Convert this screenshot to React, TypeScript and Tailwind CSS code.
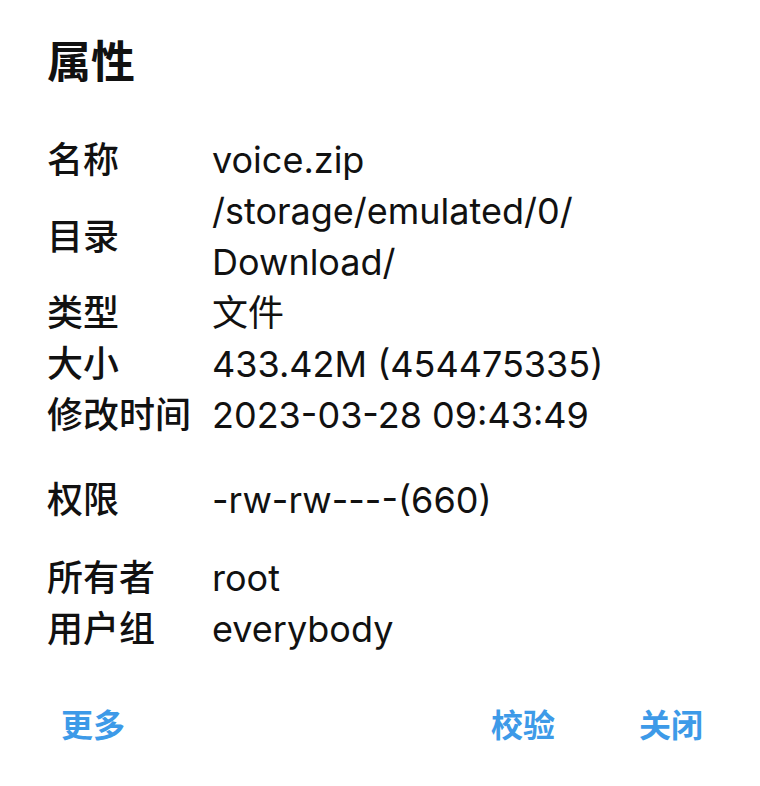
const ROWS: Array<{ label: string; value: string[]; gap?: string }> = [
  { label: "名称", value: ["voice.zip"] },
  { label: "目录", value: ["/storage/emulated/0/", "Download/"] },
  { label: "类型", value: ["文件"] },
  { label: "大小", value: ["433.42M (454475335)"] },
  { label: "修改时间", value: ["2023-03-28 09:43:49"] },
  { label: "权限", value: ["-rw-rw----(660)"], gap: "mt-[34px]" },
  { label: "所有者", value: ["root"], gap: "mt-[27px]" },
  { label: "用户组", value: ["everybody"] },
];

export default function App() {
  return (
    <div className="min-h-[786px] w-[760px] bg-white pl-[47px] pr-[43px] pt-[32px] font-['Inter','Noto_Sans_CJK_SC',sans-serif] text-[#111]">
      <h1 className="text-[44px] font-bold leading-[60px]">属性</h1>

      <div className="mt-[43px]">
        {ROWS.map((row) => (
          <div key={row.label} className={`flex items-center ${row.gap ?? ""}`}>
            <div className="w-[165px] shrink-0 text-[36px] font-medium leading-[51px]">{row.label}</div>
            <div className="text-[36px] leading-[51px]">
              {row.value.map((line) => (
                <div key={line}>{line}</div>
              ))}
            </div>
          </div>
        ))}
      </div>

      <div className="mt-[47px] flex items-center">
        <button type="button" className="px-[14px] text-[32px] font-bold leading-[48px] text-[#3d9ae8]">
          更多
        </button>
        <div className="flex-1" />
        <button type="button" className="px-[14px] text-[32px] font-bold leading-[48px] text-[#3d9ae8]">
          校验
        </button>
        <button type="button" className="ml-[56px] px-[14px] text-[32px] font-bold leading-[48px] text-[#3d9ae8]">
          关闭
        </button>
      </div>
    </div>
  );
}
